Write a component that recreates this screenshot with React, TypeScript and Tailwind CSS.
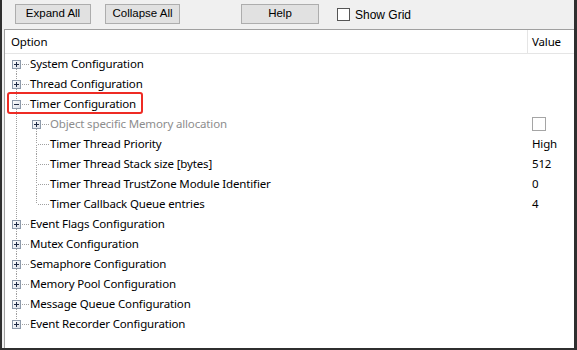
import React from 'react'

interface Row {
  label: string
  level: number
  toggle?: '+' | '-'
  value?: string
  check?: boolean
  dim?: boolean
  // own-level line above / below the node, plus pass-through lines of ancestor levels
  top: boolean
  bottom: boolean
  through?: boolean[]
  highlight?: boolean
}

const rows: Row[] = [
  { label: 'System Configuration', level: 0, toggle: '+', top: false, bottom: true },
  { label: 'Thread Configuration', level: 0, toggle: '+', top: true, bottom: true },
  { label: 'Timer Configuration', level: 0, toggle: '-', top: true, bottom: true, highlight: true },
  { label: 'Object specific Memory allocation', level: 1, toggle: '+', dim: true, check: true, top: false, bottom: true, through: [true] },
  { label: 'Timer Thread Priority', level: 1, value: 'High', top: true, bottom: true, through: [true] },
  { label: 'Timer Thread Stack size [bytes]', level: 1, value: '512', top: true, bottom: true, through: [true] },
  { label: 'Timer Thread TrustZone Module Identifier', level: 1, value: '0', top: true, bottom: true, through: [true] },
  { label: 'Timer Callback Queue entries', level: 1, value: '4', top: true, bottom: false, through: [true] },
  { label: 'Event Flags Configuration', level: 0, toggle: '+', top: true, bottom: true },
  { label: 'Mutex Configuration', level: 0, toggle: '+', top: true, bottom: true },
  { label: 'Semaphore Configuration', level: 0, toggle: '+', top: true, bottom: true },
  { label: 'Memory Pool Configuration', level: 0, toggle: '+', top: true, bottom: true },
  { label: 'Message Queue Configuration', level: 0, toggle: '+', top: true, bottom: true },
  { label: 'Event Recorder Configuration', level: 0, toggle: '+', top: true, bottom: false },
]

const dot = { stroke: '#a0a0a0', strokeWidth: 1, strokeDasharray: '1 1', shapeRendering: 'crispEdges' as const }

function Gutter({ row }: { row: Row }) {
  const w = (row.level + 1) * 20 + 3
  const cx = row.level * 20 + 10.5
  const boxed = !!row.toggle
  return (
    <svg width={w} height={20} className="shrink-0">
      <defs>
        <linearGradient id="bx" x1="0" y1="0" x2="1" y2="1">
          <stop offset="0" stopColor="#ffffff" />
          <stop offset="1" stopColor="#d8dde6" />
        </linearGradient>
      </defs>
      {(row.through || []).map((t, i) =>
        t ? <line key={i} x1={i * 20 + 10.5} y1={0} x2={i * 20 + 10.5} y2={20} {...dot} /> : null
      )}
      {row.top && <line x1={cx} y1={0} x2={cx} y2={boxed ? 6 : 10} {...dot} />}
      {row.bottom && <line x1={cx} y1={boxed ? 15 : 11} x2={cx} y2={20} {...dot} />}
      <line x1={boxed ? cx + 5 : cx + 1} y1={10.5} x2={w} y2={10.5} {...dot} />
      {boxed && (
        <g shapeRendering="crispEdges">
          <rect x={cx - 4} y={6.5} width={8} height={8} fill="url(#bx)" stroke="#8e9aaa" />
          <line x1={cx - 2.5} y1={10.5} x2={cx + 2.5} y2={10.5} stroke="#1f2a44" />
          {row.toggle === '+' && <line x1={cx} y1={8} x2={cx} y2={13} stroke="#1f2a44" />}
        </g>
      )}
    </svg>
  )
}

function Btn({ label, className }: { label: string; className: string }) {
  return (
    <button
      className={`h-[20px] border border-[#adadad] bg-[#e1e1e1] text-[11.5px] leading-none text-black ${className}`}
      style={{ fontFamily: '"Liberation Sans", Arial, sans-serif' }}
    >
      {label}
    </button>
  )
}

export default function App() {
  return (
    <div
      className="flex h-[350px] w-[577px] flex-col overflow-hidden border-b-2 border-l-2 border-r-[3px] border-[#2f2f2f] bg-[#f0f0f0] text-[11.5px] tracking-[-0.15px] text-black"
      style={{ fontFamily: '"Noto Sans", "Segoe UI", sans-serif' }}
    >
      {/* toolbar */}
      <div className="flex h-[29px] shrink-0 items-start pt-[4px] tracking-normal">
        <Btn label="Expand All" className="ml-[13px] w-[76px]" />
        <Btn label="Collapse All" className="ml-[14px] w-[75px]" />
        <Btn label="Help" className="ml-[61px] w-[78px]" />
        <label className="ml-[18px] mt-[4px] flex items-center" style={{ fontFamily: '"Liberation Sans", Arial, sans-serif' }}>
          <span className="h-[13px] w-[13px] border border-[#555] bg-white" />
          <span className="ml-[5px] text-[12px] leading-none">Show Grid</span>
        </label>
      </div>

      {/* tree panel */}
      <div className="ml-[2px] flex flex-1 flex-col border-l border-t border-[#a0a0a0] bg-white">
        <div className="flex h-[24px] shrink-0 border-b border-[#e5e5e5]">
          <div className="flex w-[523px] items-center border-r border-[#e5e5e5] pl-[6px] pt-[1px]">Option</div>
          <div className="flex items-center pl-[4px] pt-[1px]">Value</div>
        </div>
        <div className="flex flex-col">
          {rows.map((row) => (
            <div key={row.label} className="relative flex h-[20px] items-center">
              <div className="flex w-[524px] items-center pl-[1px]">
                <Gutter row={row} />
                <span className={`ml-[1px] whitespace-nowrap ${row.dim ? 'text-[#8d8d8d]' : 'text-black'}`}>
                  {row.label}
                </span>
              </div>
              <div className="flex items-center pl-[3px]">
                {row.check && <span className="h-[14px] w-[14px] border border-[#a5a5a5] bg-white" />}
                {row.value && <span>{row.value}</span>}
              </div>
              {row.highlight && (
                <div className="pointer-events-none absolute left-[2px] top-[-2px] h-[22px] w-[136px] rounded-[3px] border-2 border-[#ee2b24]" />
              )}
            </div>
          ))}
        </div>
      </div>
    </div>
  )
}
